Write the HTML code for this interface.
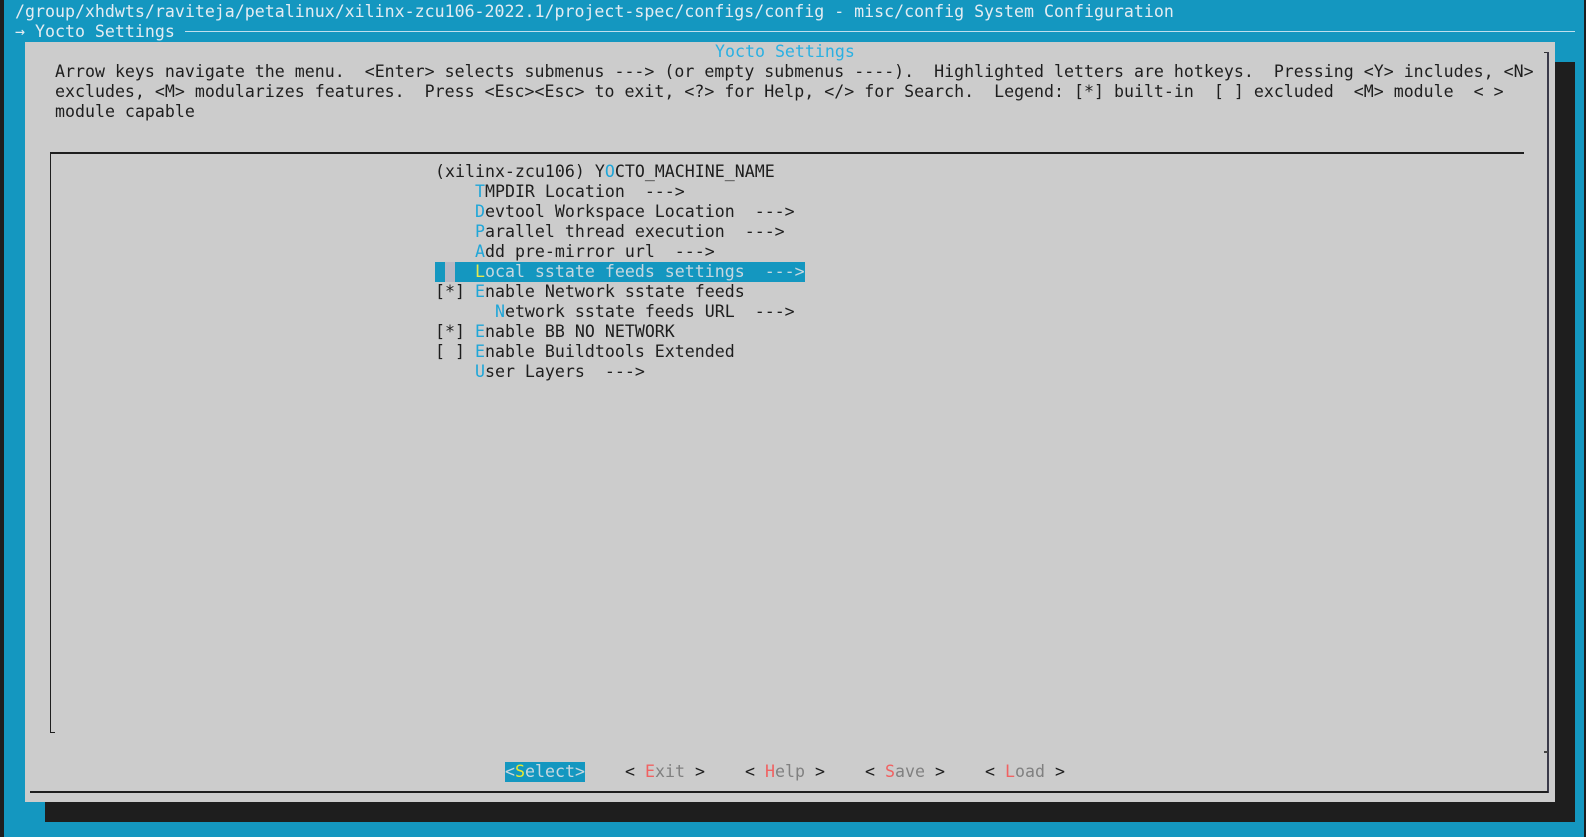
<!DOCTYPE html>
<html><head><meta charset="utf-8">
<style>
html,body{margin:0;padding:0;}
body{width:1586px;height:837px;background:#1497c0;position:relative;overflow:hidden;
font-family:"DejaVu Sans Mono","Liberation Mono",monospace;font-size:16.6px;}
.t{position:absolute;white-space:pre;line-height:20px;height:20px;color:#1e1e1e;}
.a{position:absolute;}
.h{color:#1fa6d8;}
.w{color:#e4ecf2;}
</style></head><body>
<div class="a" style="left:0;top:0;width:4px;height:837px;background:#1e1e1e"></div>
<div class="a" style="left:1584px;top:0;width:2px;height:837px;background:#1e1e1e"></div>
<div class="t w" style="left:15px;top:2px">/group/xhdwts/raviteja/petalinux/xilinx-zcu106-2022.1/project-spec/configs/config - misc/config System Configuration</div>
<div class="t w" style="left:15px;top:22px">→ Yocto Settings</div>
<div class="a" style="left:185px;top:31px;width:1390px;height:1px;background:#bfe0ee"></div>
<div class="a" style="left:45px;top:62px;width:1530px;height:760px;background:#1e1e1e"></div>
<div class="a" style="left:25px;top:42px;width:1530px;height:760px;background:#cccccc"></div>
<div class="t" style="left:715px;top:42px;color:#2ab0e2">Yocto Settings</div>
<div class="a" style="left:1544px;top:52px;width:4px;height:1px;background:#333"></div>
<div class="a" style="left:1547px;top:52px;width:1.5px;height:741px;background:#3a3a4a"></div>
<div class="a" style="left:1544px;top:751px;width:4px;height:2px;background:#444"></div>
<div class="a" style="left:30px;top:791px;width:1518px;height:1.5px;background:#1e1e1e"></div>
<div class="t" style="left:55px;top:62px">Arrow keys navigate the menu.  &lt;Enter&gt; selects submenus ---&gt; (or empty submenus ----).  Highlighted letters are hotkeys.  Pressing &lt;Y&gt; includes, &lt;N&gt;</div>
<div class="t" style="left:55px;top:82px">excludes, &lt;M&gt; modularizes features.  Press &lt;Esc&gt;&lt;Esc&gt; to exit, &lt;?&gt; for Help, &lt;/&gt; for Search.  Legend: [*] built-in  [ ] excluded  &lt;M&gt; module  &lt; &gt;</div>
<div class="t" style="left:55px;top:102px">module capable</div>
<div class="a" style="left:50px;top:152px;width:1474px;height:1.5px;background:#1e1e1e"></div>
<div class="a" style="left:49.5px;top:152px;width:1.5px;height:581px;background:#1e1e1e"></div>
<div class="a" style="left:49.5px;top:731.5px;width:5px;height:1.5px;background:#1e1e1e"></div>
<div class="t" style="left:435px;top:162px">(xilinx-zcu106) Y<span class="h">O</span>CTO_MACHINE_NAME</div>
<div class="t" style="left:435px;top:182px">    <span class="h">T</span>MPDIR Location  ---&gt;</div>
<div class="t" style="left:435px;top:202px">    <span class="h">D</span>evtool Workspace Location  ---&gt;</div>
<div class="t" style="left:435px;top:222px">    <span class="h">P</span>arallel thread execution  ---&gt;</div>
<div class="t" style="left:435px;top:242px">    <span class="h">A</span>dd pre-mirror url  ---&gt;</div>
<div class="a" style="left:435px;top:262px;width:370px;height:20px;background:#1497c0"></div>
<div class="a" style="left:445px;top:262px;width:10px;height:20px;background:#b8b8c4"></div>
<div class="t" style="left:435px;top:262px;color:#c8d8e0">    <span style="color:#e8e850">L</span>ocal sstate feeds settings  ---&gt;</div>
<div class="t" style="left:435px;top:282px">[*] <span class="h">E</span>nable Network sstate feeds</div>
<div class="t" style="left:435px;top:302px">      <span class="h">N</span>etwork sstate feeds URL  ---&gt;</div>
<div class="t" style="left:435px;top:322px">[*] <span class="h">E</span>nable BB NO NETWORK</div>
<div class="t" style="left:435px;top:342px">[ ] <span class="h">E</span>nable Buildtools Extended</div>
<div class="t" style="left:435px;top:362px">    <span class="h">U</span>ser Layers  ---&gt;</div>
<div class="a" style="left:505px;top:762px;width:80px;height:20px;background:#1497c0"></div>
<div class="t" style="left:505px;top:762px;color:#c8d8e0">&lt;<span style="color:#e8e830">S</span>elect&gt;</div>
<div class="t" style="left:625px;top:762px">&lt; <span style="color:#f06262">E</span><span style="color:#808080">xit</span> &gt;</div>
<div class="t" style="left:745px;top:762px">&lt; <span style="color:#f06262">H</span><span style="color:#808080">elp</span> &gt;</div>
<div class="t" style="left:865px;top:762px">&lt; <span style="color:#f06262">S</span><span style="color:#808080">ave</span> &gt;</div>
<div class="t" style="left:985px;top:762px">&lt; <span style="color:#f06262">L</span><span style="color:#808080">oad</span> &gt;</div>
</body></html>
